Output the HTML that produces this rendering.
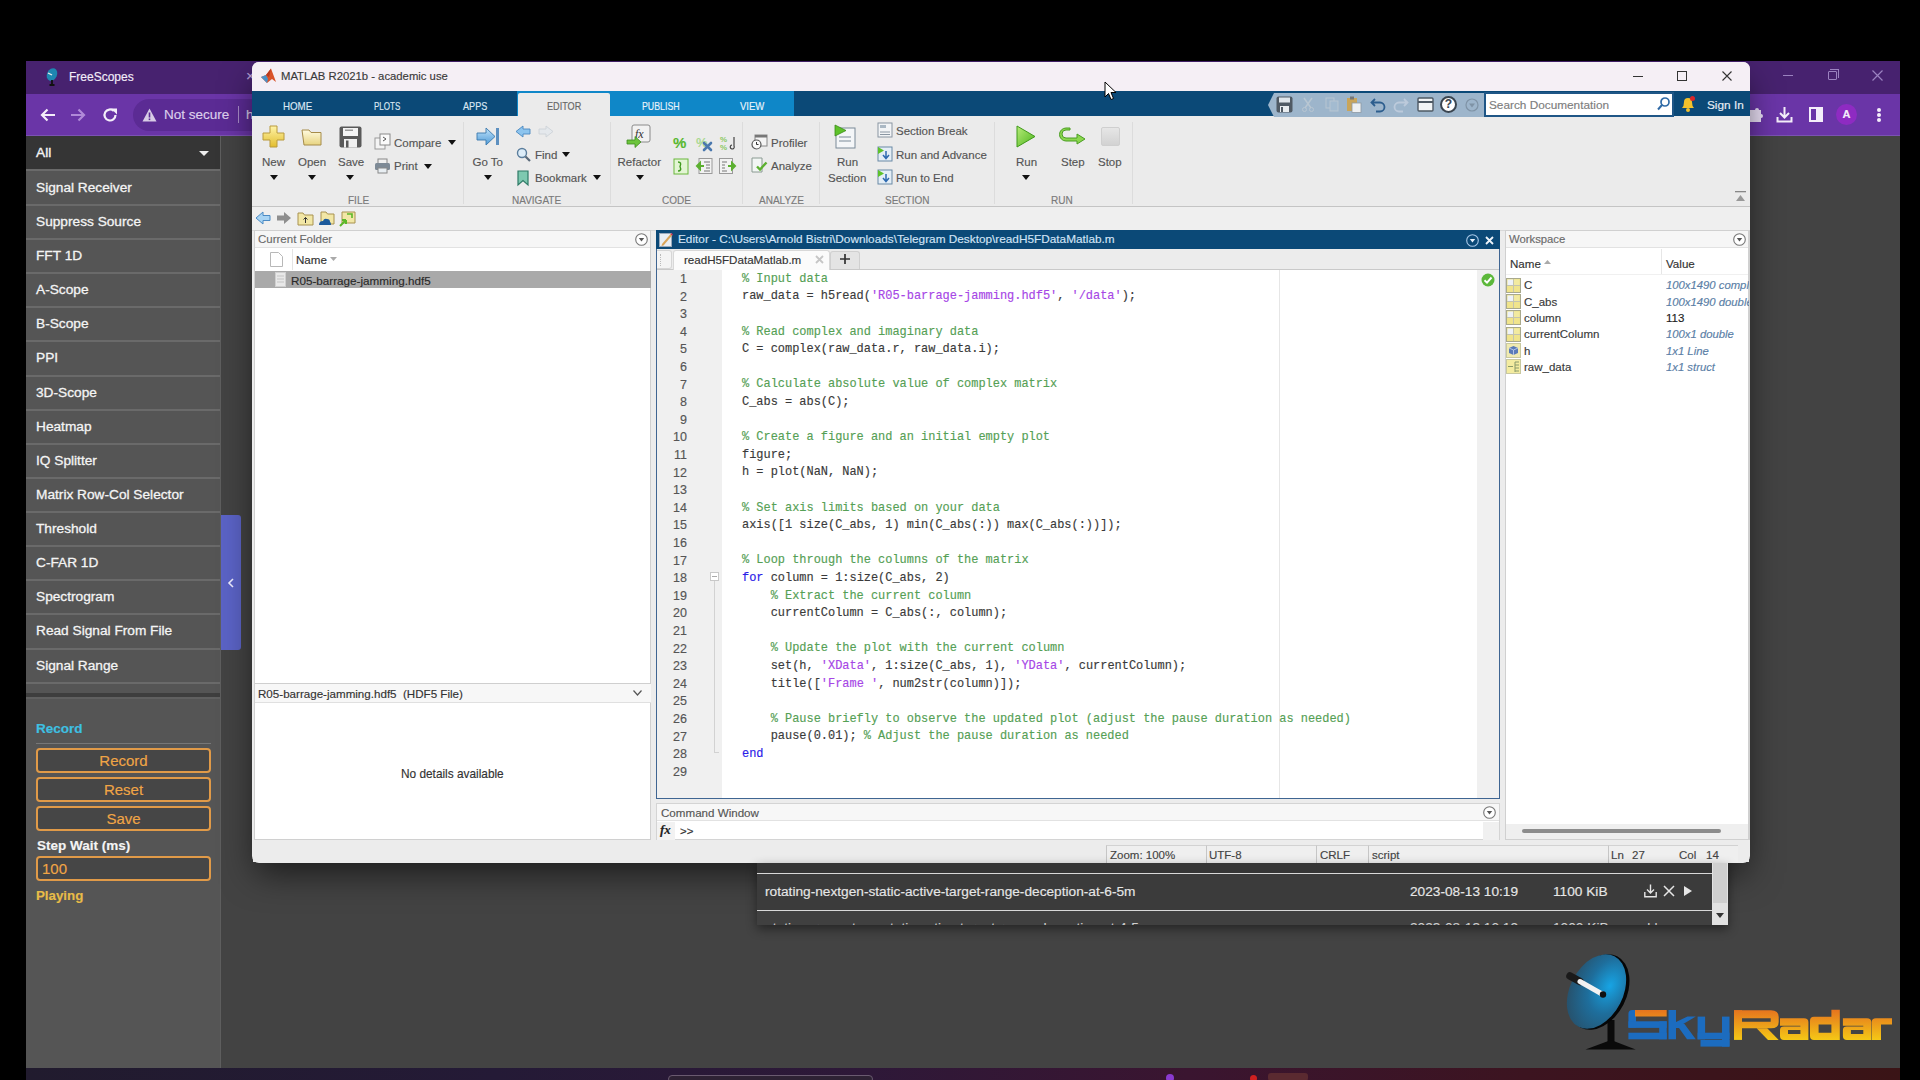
<!DOCTYPE html>
<html><head><meta charset="utf-8">
<style>
*{margin:0;padding:0;box-sizing:border-box}
html,body{width:1920px;height:1080px;overflow:hidden;background:#000;font-family:"Liberation Sans",sans-serif;position:relative;-webkit-text-stroke-width:0.15px}
.a{position:absolute}
.t{position:absolute;white-space:nowrap;line-height:1}
svg{position:absolute;overflow:visible}
/* browser */
.si{position:absolute;left:36px;color:#f4f4f4;font-size:13.7px;line-height:1;white-space:nowrap;-webkit-text-stroke:0.3px #f4f4f4}
.sl{position:absolute;left:26px;width:194px;height:2px;background:#6a6a6a}
.btn{position:absolute;left:36px;width:175px;height:25px;border:2px solid #e09a48;border-radius:4px;color:#f0a545;font-size:15px;text-align:center;line-height:21px;background:#464646}
/* matlab */
.mt{position:absolute;top:100px;font-size:10px;color:#dbe6f2;line-height:1;white-space:nowrap}
.rl{position:absolute;font-size:11.5px;color:#555;line-height:1;white-space:nowrap}
.sec{position:absolute;top:196px;font-size:10px;color:#7a7a7a;line-height:1;white-space:nowrap}
.vsep{position:absolute;top:122px;width:1px;height:82px;background:#dcdcdc}
.dd{position:absolute;width:0;height:0;border-left:4px solid transparent;border-right:4px solid transparent;border-top:5px solid #111}
.code{position:absolute;left:742px;font-family:"Liberation Mono",monospace;font-size:11.95px;line-height:1;white-space:pre;color:#3a3a3a}
.ln{position:absolute;width:30px;left:657px;text-align:right;font-size:12.5px;color:#555;line-height:1}
.cm{color:#55a055}
.st{color:#a646e6}
.kw{color:#2a20e8}
.ws{position:absolute;font-size:11.5px;line-height:1;white-space:nowrap;color:#222}
.wv{position:absolute;left:1665px;font-size:11px;line-height:1;white-space:nowrap;color:#3060a8;font-style:italic}
.sb{position:absolute;top:845px;height:18px;border-left:1px solid #c6c6c6;border-top:1px solid #d2d2d2;background:#efefef}
.sbt{position:absolute;top:850px;font-size:11.5px;color:#444;line-height:1;white-space:nowrap}
</style></head><body>
<!-- ============ BROWSER ============ -->
<div class="a" style="left:26px;top:61px;width:1874px;height:1007px;background:#434343"></div>
<div class="a" style="left:26px;top:61px;width:1874px;height:33px;background:#47226f"></div>
<div class="a" style="left:26px;top:94px;width:1874px;height:41px;background:#6a35a7"></div>
<div class="a" style="left:26px;top:135px;width:1874px;height:1px;background:#7b52b3"></div>
<!-- tab -->
<svg style="left:44px;top:68px" width="14" height="18" viewBox="0 0 14 18"><ellipse cx="8" cy="6.5" rx="5" ry="6.5" transform="rotate(25 8 6.5)" fill="#1f86b0"/><path d="M4 5 L8 7" stroke="#eee" stroke-width="1.3"/><path d="M8 12 V16.5 M5.5 17 H10.5" stroke="#111" stroke-width="1.8"/></svg>
<div class="t" style="left:69px;top:71px;font-size:12px;color:#f2ecf8">FreeScopes</div>
<div class="t" style="left:246px;top:68px;font-size:15px;color:#b8a2d8">×</div>
<!-- nav -->
<svg style="left:39px;top:107px" width="17" height="16" viewBox="0 0 17 16"><path d="M16 8 H3 M8.5 2.5 L3 8 L8.5 13.5" stroke="#f4eefa" stroke-width="2.2" fill="none"/></svg>
<svg style="left:70px;top:107px" width="17" height="16" viewBox="0 0 17 16"><path d="M1 8 H14 M8.5 2.5 L14 8 L8.5 13.5" stroke="#b08ad8" stroke-width="2.2" fill="none"/></svg>
<svg style="left:101px;top:106px" width="18" height="18" viewBox="0 0 18 18"><path d="M14.5 9 A5.5 5.5 0 1 1 12.8 5" stroke="#f4eefa" stroke-width="2.2" fill="none"/><path d="M10 2.5 L16 2.5 L16 8.5 Z" fill="#f4eefa"/></svg>
<div class="a" style="left:133px;top:99px;width:140px;height:32px;background:#5b2b94;border-radius:16px"></div>
<svg style="left:142px;top:108px" width="15" height="14" viewBox="0 0 15 14"><path d="M7.5 0.5 L14.5 13.5 L0.5 13.5 Z" fill="#d8cce6"/><rect x="6.7" y="4.5" width="1.6" height="5" fill="#5b2b94"/><rect x="6.7" y="10.5" width="1.6" height="1.6" fill="#5b2b94"/></svg>
<div class="t" style="left:164px;top:108px;font-size:13.5px;color:#ddd0ec">Not secure</div>
<div class="a" style="left:238px;top:106px;width:1px;height:17px;background:#a88cc8"></div>
<div class="t" style="left:246px;top:108px;font-size:13.5px;color:#ddd0ec">h</div>
<!-- right chrome -->
<div class="a" style="left:1783px;top:75px;width:10px;height:1px;background:#9b82c0"></div>
<div class="a" style="left:1828px;top:71px;width:9px;height:9px;border:1px solid #9b82c0;border-radius:1px"></div>
<div class="a" style="left:1830px;top:69px;width:9px;height:9px;border-top:1px solid #9b82c0;border-right:1px solid #9b82c0"></div>
<svg style="left:1872px;top:70px" width="11" height="11" viewBox="0 0 11 11"><path d="M0.5 0.5 L10.5 10.5 M10.5 0.5 L0.5 10.5" stroke="#9b82c0" stroke-width="1.2"/></svg>
<svg style="left:1750px;top:108px" width="12" height="14" viewBox="0 0 12 14"><path d="M0 2 h5 a2 2 0 0 1 4 0 h2 v4 a2 2 0 0 1 0 4 v4 h-11 z" fill="#e8def4"/></svg>
<svg style="left:1776px;top:106px" width="17" height="17" viewBox="0 0 17 17"><path d="M8.5 1 V11 M4 7 L8.5 11.5 L13 7 M1.5 11 V15.5 H15.5 V11" stroke="#f4eefa" stroke-width="2" fill="none"/></svg>
<svg style="left:1809px;top:107px" width="14" height="15" viewBox="0 0 14 15"><rect x="1" y="1" width="12" height="13" stroke="#f4eefa" stroke-width="2" fill="none"/><rect x="7" y="1" width="6" height="13" fill="#f4eefa"/></svg>
<div class="a" style="left:1836px;top:104px;width:21px;height:21px;border-radius:50%;background:#8e2bc2;color:#f4eefa;font-size:11px;font-weight:bold;text-align:center;line-height:21px">A</div>
<div class="a" style="left:1877px;top:108px;width:4px;height:4px;border-radius:50%;background:#f4eefa;box-shadow:0 5px 0 #f4eefa,0 10px 0 #f4eefa"></div>
<!-- sidebar -->
<div class="a" style="left:26px;top:136px;width:194px;height:932px;background:#555555"></div>
<div class="a" style="left:26px;top:136px;width:194px;height:34px;background:#353535"></div>
<div class="t" style="left:36px;top:146px;font-size:13.7px;color:#f4f4f4;-webkit-text-stroke:0.35px #f4f4f4">All</div>
<div class="dd" style="left:199px;top:151px;border-top-color:#eee;border-left-width:5px;border-right-width:5px"></div>
<div class="sl" style="top:169px;height:2px;background:#6a6a6a"></div>
<div class="sl" style="top:204px"></div>
<div class="sl" style="top:238px"></div>
<div class="sl" style="top:272px"></div>
<div class="sl" style="top:306px"></div>
<div class="sl" style="top:340px"></div>
<div class="sl" style="top:375px"></div>
<div class="sl" style="top:409px"></div>
<div class="sl" style="top:443px"></div>
<div class="sl" style="top:477px"></div>
<div class="sl" style="top:511px"></div>
<div class="sl" style="top:545px"></div>
<div class="sl" style="top:579px"></div>
<div class="sl" style="top:613px"></div>
<div class="sl" style="top:648px"></div>
<div class="sl" style="top:682px"></div>
<div class="sl" style="top:693px;height:4px;background:#3e3e3e"></div>
<div class="sl" style="top:697px;height:2px;background:#606060"></div>
<div class="si" style="top:181px">Signal Receiver</div>
<div class="si" style="top:215px">Suppress Source</div>
<div class="si" style="top:249px">FFT 1D</div>
<div class="si" style="top:283px">A-Scope</div>
<div class="si" style="top:317px">B-Scope</div>
<div class="si" style="top:351px">PPI</div>
<div class="si" style="top:386px">3D-Scope</div>
<div class="si" style="top:420px">Heatmap</div>
<div class="si" style="top:454px">IQ Splitter</div>
<div class="si" style="top:488px">Matrix Row-Col Selector</div>
<div class="si" style="top:522px">Threshold</div>
<div class="si" style="top:556px">C-FAR 1D</div>
<div class="si" style="top:590px">Spectrogram</div>
<div class="si" style="top:624px">Read Signal From File</div>
<div class="si" style="top:659px">Signal Range</div>
<div class="t" style="left:36px;top:722px;font-size:13.5px;font-weight:bold;color:#3ec0e2">Record</div>
<div class="a" style="left:36px;top:743px;width:175px;height:1px;background:#777"></div>
<div class="btn" style="top:748px">Record</div>
<div class="btn" style="top:777px">Reset</div>
<div class="btn" style="top:806px">Save</div>
<div class="t" style="left:37px;top:839px;font-size:13.5px;font-weight:bold;color:#f4f4f4">Step Wait (ms)</div>
<div class="btn" style="top:856px;text-align:left;padding-left:4px">100</div>
<div class="t" style="left:36px;top:889px;font-size:13.3px;font-weight:bold;color:#e8bc48">Playing</div>
<div class="a" style="left:220px;top:136px;width:1px;height:932px;background:#5e5e5e"></div>
<div class="a" style="left:221px;top:515px;width:20px;height:135px;background:#5b63c6;border-radius:0 3px 3px 0"></div>
<svg style="left:228px;top:578px" width="6" height="10" viewBox="0 0 6 10"><path d="M5 1 L1 5 L5 9" stroke="#eef" stroke-width="1.6" fill="none"/></svg>
<!-- taskbar -->
<div class="a" style="left:26px;top:1068px;width:1874px;height:12px;background:linear-gradient(90deg,#211b2e 0%,#241a36 25%,#2e1838 45%,#3a1530 62%,#3c1420 80%,#3a1416 100%)"></div>
<div class="a" style="left:668px;top:1075px;width:205px;height:8px;border:1px solid #6a5a70;border-radius:6px;background:#2e2234"></div>
<div class="a" style="left:1166px;top:1074px;width:8px;height:8px;border-radius:50%;background:#8a3ad0"></div>
<div class="a" style="left:1250px;top:1075px;width:7px;height:7px;border-radius:50%;background:#d02020"></div>
<div class="a" style="left:1268px;top:1073px;width:40px;height:8px;background:#5a2a30;border-radius:3px"></div>
<!-- MATLAB_START -->
<!-- MATLAB window frame -->
<div class="a" style="left:252px;top:62px;width:1498px;height:801px;background:#ececec;border-radius:7px;overflow:hidden;box-shadow:0 14px 34px -4px rgba(0,0,0,.6)">
  <div class="a" style="left:0;top:0;width:1498px;height:29px;background:#f5eff5"></div>
  <div class="a" style="left:0;top:29px;width:1498px;height:25px;background:#0b4977"></div>
  <div class="a" style="left:265px;top:29px;width:277px;height:25px;background:#0f87c8"></div>
  <div class="a" style="left:266px;top:31px;width:92px;height:24px;background:#ebebeb;border-radius:2px 2px 0 0"></div>
  <div class="a" style="left:0;top:54px;width:1498px;height:90px;background:#ebebeb"></div>
  <div class="a" style="left:0;top:144px;width:1498px;height:1px;background:#c4c4c4"></div>
  <div class="a" style="left:0;top:145px;width:1498px;height:23px;background:#efefef"></div>
  <div class="a" style="left:0;top:168px;width:1498px;height:1px;background:#d8d8d8"></div>
</div>
<!-- title bar -->
<svg style="left:260px;top:68px" width="17" height="16" viewBox="0 0 17 16"><path d="M1 9 L6 7 L11 0.5 L16 14 L12 11 L7 15 Z" fill="#d9532a"/><path d="M1 9 L6 7 L8 11 L7 15 Z" fill="#4a90c8"/><path d="M6 7 L11 0.5 L9 9 Z" fill="#b83a1e"/></svg>
<div class="t" style="left:281px;top:70.5px;font-size:11.3px;color:#3a3a3a">MATLAB R2021b - academic use</div>
<div class="a" style="left:1633px;top:76px;width:10px;height:1px;background:#333"></div>
<div class="a" style="left:1677px;top:71px;width:10px;height:10px;border:1px solid #333"></div>
<svg style="left:1722px;top:71px" width="10" height="10" viewBox="0 0 10 10"><path d="M0.5 0.5 L9.5 9.5 M9.5 0.5 L0.5 9.5" stroke="#333" stroke-width="1.1"/></svg>
<!-- tabs -->
<div class="t" style="left:283px;top:101px;font-size:10.6px;color:#dce8f4;transform:scaleX(.92);transform-origin:0 0">HOME</div>
<div class="t" style="left:373.5px;top:101px;font-size:10.6px;color:#dce8f4;transform:scaleX(.76);transform-origin:0 0">PLOTS</div>
<div class="t" style="left:463px;top:101px;font-size:10.6px;color:#dce8f4;transform:scaleX(.86);transform-origin:0 0">APPS</div>
<div class="t" style="left:547px;top:101px;font-size:10.6px;color:#666;transform:scaleX(.86);transform-origin:0 0">EDITOR</div>
<div class="t" style="left:642px;top:101px;font-size:10.6px;color:#eaf4fb;transform:scaleX(.83);transform-origin:0 0">PUBLISH</div>
<div class="t" style="left:740px;top:101px;font-size:10.6px;color:#eaf4fb;transform:scaleX(.9);transform-origin:0 0">VIEW</div>
<!-- quick access -->
<svg style="left:1266px;top:93px" width="220" height="24" viewBox="0 0 220 24"><path d="M8 0 H220 V24 H8 L2 12 Z" fill="#9db5cb"/></svg>
<svg style="left:1276px;top:96px" width="17" height="17" viewBox="0 0 17 17"><rect x="0.5" y="0.5" width="16" height="16" rx="2" fill="#505a64"/><rect x="3" y="1.5" width="11" height="5" fill="#dfe5ea"/><rect x="4" y="10" width="9" height="6" fill="#e8ecef"/><rect x="5" y="11" width="2" height="5" fill="#505a64"/></svg>
<svg style="left:1302px;top:97px" width="12" height="15" viewBox="0 0 12 15"><path d="M2 1 L9 11 M10 1 L3 11" stroke="#b8c6d2" stroke-width="1.5"/><circle cx="2.5" cy="12.5" r="2" fill="none" stroke="#b8c6d2"/><circle cx="9.5" cy="12.5" r="2" fill="none" stroke="#b8c6d2"/></svg>
<svg style="left:1325px;top:97px" width="14" height="15" viewBox="0 0 14 15"><rect x="1" y="1" width="8" height="10" fill="none" stroke="#b8c6d2"/><rect x="5" y="4" width="8" height="10" fill="#a3bbd0" stroke="#b8c6d2"/></svg>
<svg style="left:1346px;top:96px" width="16" height="17" viewBox="0 0 16 17"><rect x="1" y="2" width="10" height="13" fill="#c9a55a"/><rect x="4" y="0.5" width="4" height="3" fill="#777"/><rect x="6" y="7" width="9" height="9.5" fill="#eef0f2" stroke="#8d99a4" stroke-width=".8"/></svg>
<svg style="left:1370px;top:97px" width="16" height="15" viewBox="0 0 16 15"><path d="M5 2 L1.5 5.5 L5 9 M1.5 5.5 H10 a4.5 4.5 0 0 1 0 9 H6" stroke="#2d5e8e" stroke-width="1.8" fill="none"/></svg>
<svg style="left:1393px;top:97px" width="16" height="15" viewBox="0 0 16 15"><path d="M11 2 L14.5 5.5 L11 9 M14.5 5.5 H6 a4.5 4.5 0 0 0 0 9 H10" stroke="#bccadb" stroke-width="1.8" fill="none"/></svg>
<svg style="left:1417px;top:97px" width="17" height="15" viewBox="0 0 17 15"><rect x="1" y="1" width="15" height="13" rx="1" fill="#f2f4f6" stroke="#4e5964" stroke-width="1.4"/><rect x="1" y="4" width="15" height="2" fill="#4e5964"/></svg>
<div class="a" style="left:1440px;top:96px;width:17px;height:17px;border-radius:50%;background:#fff;border:2px solid #3a4550;color:#3a4550;font-size:12px;font-weight:bold;text-align:center;line-height:13px">?</div>
<svg style="left:1465px;top:98px" width="14" height="14" viewBox="0 0 14 14"><circle cx="7" cy="7" r="6" fill="none" stroke="#7f93a6" stroke-width="1.2"/><path d="M4 5.5 H10 L7 9.5 Z" fill="#7f93a6"/></svg>
<div class="a" style="left:1484px;top:92px;width:190px;height:25px;background:#fff;border:2px solid #1f5686"></div>
<div class="t" style="left:1489px;top:100px;font-size:11.8px;color:#7d7d7d">Search Documentation</div>
<svg style="left:1657px;top:97px" width="13" height="14" viewBox="0 0 13 14"><circle cx="8" cy="5" r="4" fill="none" stroke="#2f6aa6" stroke-width="1.7"/><path d="M5 8 L1 12.5" stroke="#2f6aa6" stroke-width="2"/></svg>
<svg style="left:1680px;top:95px" width="16" height="18" viewBox="0 0 16 18"><path d="M2 13 Q4 11 4 7 A4 4 0 0 1 12 7 Q12 11 14 13 Z" fill="#f3c12b"/><circle cx="8" cy="15" r="2" fill="#f3c12b"/><circle cx="12.5" cy="3.5" r="2.5" fill="#d8262a"/></svg>
<div class="t" style="left:1707px;top:100px;font-size:11.8px;color:#e8eff6">Sign In</div>
<!-- ribbon: FILE -->
<svg style="left:262px;top:125px" width="23" height="23" viewBox="0 0 23 23"><defs><linearGradient id="gy" x1="0" y1="0" x2="0" y2="1"><stop offset="0" stop-color="#fff4a8"/><stop offset="1" stop-color="#e2bd2e"/></linearGradient></defs><path d="M8 1 H15 V8 H22 V15 H15 V22 H8 V15 H1 V8 H8 Z" fill="url(#gy)" stroke="#b99a3c" stroke-width="1"/></svg>
<div class="rl" style="left:262px;top:156.5px">New</div>
<div class="dd" style="left:270px;top:175px"></div>
<svg style="left:301px;top:129px" width="22" height="17" viewBox="0 0 22 17"><defs><linearGradient id="gf" x1="0" y1="0" x2="0" y2="1"><stop offset="0" stop-color="#fffbe0"/><stop offset="1" stop-color="#e8d480"/></linearGradient></defs><path d="M1 1 H8 L10 3.5 H20 V16 H3 Z" fill="url(#gf)" stroke="#a68c4a" stroke-width="1"/></svg>
<div class="rl" style="left:298px;top:156.5px">Open</div>
<div class="dd" style="left:307.5px;top:175px"></div>
<svg style="left:339px;top:126px" width="23" height="22" viewBox="0 0 23 22"><rect x="0.5" y="0.5" width="22" height="21" rx="2" fill="#5a5a5a"/><rect x="4" y="2" width="15" height="8" fill="#f4f4f4"/><rect x="6" y="3.5" width="8" height="1.5" fill="#999"/><rect x="5" y="13" width="13" height="8.5" fill="#f0f0f0"/><rect x="7" y="14.5" width="2.5" height="7" fill="#5a5a5a"/></svg>
<div class="rl" style="left:338px;top:156.5px">Save</div>
<div class="dd" style="left:346px;top:175px"></div>
<svg style="left:374px;top:133px" width="17" height="17" viewBox="0 0 17 17"><rect x="1" y="5" width="10" height="11" fill="#f4f4f4" stroke="#9a9a9a"/><rect x="6" y="1" width="10" height="11" fill="#fafafa" stroke="#8a8a8a"/><path d="M9 4 L12 6 L9 8" stroke="#555" fill="none"/></svg>
<div class="rl" style="left:394px;top:138px">Compare</div>
<div class="dd" style="left:448px;top:140px"></div>
<svg style="left:374px;top:158px" width="17" height="16" viewBox="0 0 17 16"><rect x="4" y="1" width="9" height="5" fill="#f0f0f0" stroke="#888"/><rect x="1" y="5" width="15" height="7" rx="1.5" fill="#7d8a96"/><rect x="4" y="10" width="9" height="5" fill="#e8eef2" stroke="#888"/></svg>
<div class="rl" style="left:394px;top:161px">Print</div>
<div class="dd" style="left:424px;top:164px"></div>
<div class="sec" style="left:348px">FILE</div>
<div class="vsep" style="left:463px"></div>
<!-- NAVIGATE -->
<svg style="left:476px;top:127px" width="25" height="19" viewBox="0 0 25 19"><defs><linearGradient id="gb" x1="0" y1="0" x2="0" y2="1"><stop offset="0" stop-color="#bfe3fb"/><stop offset="1" stop-color="#4f9ad6"/></linearGradient></defs><path d="M1 6 H10 V1 L19 9.5 L10 18 V13 H1 Z" fill="url(#gb)" stroke="#3a78ad" stroke-width=".9"/><rect x="20" y="1" width="3" height="17" fill="#5d90c0"/></svg>
<div class="rl" style="left:472.5px;top:156.5px">Go To</div>
<div class="dd" style="left:484px;top:175px"></div>
<svg style="left:515px;top:125px" width="16" height="13" viewBox="0 0 16 13"><path d="M15 4 H8 V1 L1 6.5 L8 12 V9 H15 Z" fill="#8cc4ee" stroke="#4a88c0" stroke-width=".9"/></svg>
<svg style="left:538px;top:125px" width="16" height="13" viewBox="0 0 16 13"><path d="M1 4 H8 V1 L15 6.5 L8 12 V9 H1 Z" fill="#e4e8ec" stroke="#cdd3d8" stroke-width=".9"/></svg>
<svg style="left:516px;top:147px" width="15" height="15" viewBox="0 0 15 15"><circle cx="6" cy="6" r="4.5" fill="#dcecf8" stroke="#5a7d9c" stroke-width="1.4"/><path d="M9.5 9.5 L14 14" stroke="#5a6a7a" stroke-width="2.2"/></svg>
<div class="rl" style="left:535px;top:149.5px">Find</div>
<div class="dd" style="left:562px;top:152px"></div>
<svg style="left:517px;top:170px" width="12" height="16" viewBox="0 0 12 16"><path d="M1 1 H11 V15 L6 10.5 L1 15 Z" fill="#7ec9b0" stroke="#2e7a66" stroke-width="1.2"/></svg>
<div class="rl" style="left:535px;top:172.5px">Bookmark</div>
<div class="dd" style="left:593px;top:175px"></div>
<div class="sec" style="left:512px">NAVIGATE</div>
<div class="vsep" style="left:610px"></div>
<!-- CODE -->
<svg style="left:626px;top:124px" width="26" height="24" viewBox="0 0 26 24"><rect x="6" y="1" width="18" height="17" rx="2" fill="#f2f2f2" stroke="#8a8a8a"/><text x="9" y="14" font-family="Liberation Serif" font-style="italic" font-size="12" fill="#333">fx</text><path d="M1 16 H9 V12.5 L15 18 L9 23.5 V20 H1 Z" fill="#6cc43c" stroke="#3d8a1e" stroke-width=".8"/></svg>
<div class="rl" style="left:617.5px;top:156.5px">Refactor</div>
<div class="dd" style="left:636px;top:175px"></div>
<div class="t" style="left:673px;top:135px;font-size:15px;color:#58b830;font-weight:bold">%</div>
<svg style="left:696px;top:135px" width="17" height="16" viewBox="0 0 17 16"><text x="0" y="12" font-size="13" font-weight="bold" fill="#a8d890" font-family="Liberation Sans">%</text><path d="M8 8 L15 15 M15 8 L8 15" stroke="#4a78ae" stroke-width="2.6" stroke-linecap="round"/></svg>
<svg style="left:720px;top:134px" width="17" height="17" viewBox="0 0 17 17"><text x="0" y="8" font-size="8" font-weight="bold" fill="#8ac860" font-family="Liberation Sans">%</text><text x="0" y="16" font-size="8" font-weight="bold" fill="#8ac860" font-family="Liberation Sans">%</text><path d="M14 3 V12 a2 2 0 1 1 -2 -1" stroke="#444" stroke-width="1.2" fill="none"/></svg>
<svg style="left:673px;top:158px" width="16" height="17" viewBox="0 0 16 17"><rect x="1" y="1" width="14" height="15" fill="#e3f5d4" stroke="#6ab83c"/><path d="M5 4 Q9 4 7 8.5 Q9 13 5 13" stroke="#3f9a1e" stroke-width="1.4" fill="none"/></svg>
<svg style="left:696px;top:158px" width="17" height="16" viewBox="0 0 17 16"><rect x="3" y="0.5" width="13" height="15" fill="#f2f2f2" stroke="#9a9a9a"/><path d="M8 4 H14 M10 7 H14 M10 10 H14 M8 13 H14" stroke="#777"/><path d="M1 8 L4 5 V11 Z M4 8 H8" fill="#5cb030" stroke="#5cb030" stroke-width="2"/></svg>
<svg style="left:719px;top:158px" width="17" height="16" viewBox="0 0 17 16"><rect x="0.5" y="0.5" width="13" height="15" fill="#f2f2f2" stroke="#9a9a9a"/><path d="M3 4 H8 M3 7 H6 M3 10 H6 M3 13 H8" stroke="#777"/><path d="M16 8 L13 5 V11 Z M13 8 H9" fill="#5cb030" stroke="#5cb030" stroke-width="2"/></svg>
<div class="sec" style="left:662px">CODE</div>
<div class="vsep" style="left:742px"></div>
<!-- ANALYZE -->
<svg style="left:751px;top:134px" width="17" height="16" viewBox="0 0 17 16"><rect x="4" y="1" width="12" height="11" fill="#f4f4f4" stroke="#888"/><rect x="4" y="1" width="12" height="2.5" fill="#777"/><circle cx="5.5" cy="10.5" r="4.5" fill="#fafafa" stroke="#555" stroke-width="1.2"/><path d="M5.5 8 V10.5 H7.5" stroke="#333" fill="none"/></svg>
<div class="rl" style="left:771px;top:137.5px">Profiler</div>
<svg style="left:751px;top:157px" width="17" height="16" viewBox="0 0 17 16"><path d="M1 1 H11 V15 H1 Z" fill="#f2f6f4" stroke="#8a9a92"/><path d="M6 9.5 L9 12.5 L15.5 5.5" stroke="#5cb030" stroke-width="2.4" fill="none"/></svg>
<div class="rl" style="left:771px;top:160.5px">Analyze</div>
<div class="sec" style="left:759px">ANALYZE</div>
<div class="vsep" style="left:819px"></div>
<!-- SECTION -->
<svg style="left:834px;top:124px" width="23" height="25" viewBox="0 0 23 25"><rect x="2" y="4" width="19" height="20" fill="#f4f6f8" stroke="#7a8a98"/><path d="M5 13 H17 M5 17 H17" stroke="#7a8a98" stroke-width="1.2"/><path d="M1 1 L12 6.5 L1 12 Z" fill="#5ec22a" stroke="#3a8a18" stroke-width=".8"/></svg>
<div class="rl" style="left:837px;top:156.5px">Run</div>
<div class="rl" style="left:828px;top:172.5px">Section</div>
<svg style="left:877px;top:122px" width="16" height="16" viewBox="0 0 16 16"><rect x="1" y="1" width="14" height="14" fill="#f2f4f6" stroke="#8a96a2"/><rect x="3" y="3" width="6" height="3" fill="#aab8c4"/><path d="M3 10 H13 M3 12.5 H13" stroke="#8a96a2"/></svg>
<div class="rl" style="left:896px;top:126px">Section Break</div>
<svg style="left:877px;top:146px" width="16" height="16" viewBox="0 0 16 16"><rect x="1" y="1" width="14" height="14" fill="#e4eef6" stroke="#6a8aa6"/><path d="M1 1 L7 4.5 L1 8 Z" fill="#5ec22a"/><path d="M9 5 V12 M6 9 L9 12.5 L12 9" stroke="#2e6ab0" stroke-width="1.5" fill="none"/></svg>
<div class="rl" style="left:896px;top:149.5px">Run and Advance</div>
<svg style="left:877px;top:169px" width="16" height="16" viewBox="0 0 16 16"><rect x="1" y="1" width="14" height="14" fill="#e4eef6" stroke="#6a8aa6"/><path d="M1 1 L7 4.5 L1 8 Z" fill="#5ec22a"/><path d="M9 5 V12 M6 9 L9 12.5 L12 9" stroke="#2e6ab0" stroke-width="1.5" fill="none"/></svg>
<div class="rl" style="left:896px;top:172.5px">Run to End</div>
<div class="sec" style="left:885px">SECTION</div>
<div class="vsep" style="left:994px"></div>
<!-- RUN -->
<svg style="left:1016px;top:125px" width="20" height="23" viewBox="0 0 20 23"><defs><linearGradient id="gg" x1="0" y1="0" x2="1" y2="1"><stop offset="0" stop-color="#b8ec7a"/><stop offset="1" stop-color="#4cb41c"/></linearGradient></defs><path d="M1 1 L19 11.5 L1 22 Z" fill="url(#gg)" stroke="#3f9a1a" stroke-width="1"/></svg>
<div class="rl" style="left:1016px;top:156.5px">Run</div>
<div class="dd" style="left:1022px;top:175px"></div>
<svg style="left:1061px;top:125px" width="25" height="22" viewBox="0 0 25 22"><path d="M9 5 H5 a4 4 0 0 0 0 8 H16 V9 L24 14 L16 19 V16 H5 a6.5 6.5 0 0 1 0 -13 H9 Z" fill="#8ad64e" stroke="#4a9e22" stroke-width="1"/></svg>
<div class="rl" style="left:1061px;top:156.5px">Step</div>
<div class="a" style="left:1101px;top:127px;width:19px;height:19px;background:linear-gradient(#e6e6e6,#d2d2d2);border:1px solid #cfcfcf;border-radius:2px"></div>
<div class="rl" style="left:1098px;top:156.5px">Stop</div>
<div class="sec" style="left:1051px">RUN</div>
<div class="vsep" style="left:1132px"></div>
<svg style="left:1735px;top:191px" width="11" height="12" viewBox="0 0 11 12"><rect x="0" y="0" width="11" height="1.3" fill="#888"/><path d="M1 10 L5.5 4 L10 10 Z" fill="#999"/></svg>
<!-- nav toolbar -->
<svg style="left:255px;top:211px" width="16" height="14" viewBox="0 0 16 14"><path d="M15 4.5 H8 V1 L1 7 L8 13 V9.5 H15 Z" fill="#a8d4f4" stroke="#4a8ac4" stroke-width="1"/></svg>
<svg style="left:276px;top:211px" width="16" height="14" viewBox="0 0 16 14"><path d="M1 4.5 H8 V1 L15 7 L8 13 V9.5 H1 Z" fill="#8e8e8e"/></svg>
<svg style="left:297px;top:211px" width="17" height="15" viewBox="0 0 17 15"><path d="M1 2 H6 L7.5 4 H16 V14 H1 Z" fill="#f2e7a6" stroke="#a89250"/><path d="M8.5 12 V6.5 M6.5 8.5 L8.5 6.5 L10.5 8.5" stroke="#333" fill="none"/></svg>
<svg style="left:318px;top:211px" width="17" height="15" viewBox="0 0 17 15"><path d="M3 1 H8 L9.5 3 H16 V13 H3 Z" fill="#f2e7a6" stroke="#a89250"/><path d="M1 14 Q1 10 5 10 Q6 7 9 8 Q12 8 12 11 Q13 11 13 14 Z" fill="#1c5a9c"/></svg>
<svg style="left:339px;top:211px" width="17" height="16" viewBox="0 0 17 16"><path d="M3 1 H16 V12 H3 Z" fill="#f2e7a6" stroke="#a89250"/><path d="M1 15 L7 9 M7 9 V13 M7 9 H3" stroke="#5ab82a" stroke-width="2" fill="none"/><path d="M8 3 H13 V7" stroke="#5ab82a" stroke-width="1.6" fill="none"/></svg>
<!-- PANELS -->
<div class="a" style="left:254px;top:230px;width:397px;height:610px;background:#fff;border:1px solid #d0d0d0"></div>
<div class="a" style="left:255px;top:231px;width:395px;height:17px;background:#f6f6f6;border-bottom:1px solid #e2e2e2"></div>
<div class="t" style="left:258px;top:233.5px;font-size:11.5px;color:#6a6a6a">Current Folder</div>
<svg style="left:635px;top:233px" width="13" height="13" viewBox="0 0 13 13"><circle cx="6.5" cy="6.5" r="5.8" fill="#fff" stroke="#777" stroke-width="1.1"/><path d="M3.8 5 H9.2 L6.5 8.6 Z" fill="#555"/></svg>
<svg style="left:270px;top:252px" width="13" height="15" viewBox="0 0 13 15"><path d="M0.5 0.5 H8.5 L12.5 4.5 V14.5 H0.5 Z" fill="#fff" stroke="#b8b8b8"/></svg>
<div class="a" style="left:292px;top:249px;width:1px;height:21px;background:#e4e4e4"></div>
<div class="t" style="left:296px;top:254px;font-size:11.6px;color:#333">Name</div>
<svg style="left:330px;top:257px" width="7" height="4" viewBox="0 0 7 4"><path d="M0 0 H7 L3.5 4 Z" fill="#aaa"/></svg>
<div class="a" style="left:255px;top:271px;width:396px;height:17px;background:#a9a9a9"></div>
<svg style="left:275px;top:272px" width="11" height="15" viewBox="0 0 11 15"><rect x="0.5" y="0.5" width="10" height="14" fill="#e8e8e8" stroke="#cfcfcf"/><path d="M2 4 H9 M2 7 H9 M2 10 H9" stroke="#c4c4c4"/></svg>
<div class="t" style="left:291px;top:275px;font-size:11.7px;color:#2a2a2a">R05-barrage-jamming.hdf5</div>
<div class="a" style="left:255px;top:683px;width:396px;height:20px;background:#f7f7f7;border-top:1px solid #cfcfcf;border-bottom:1px solid #e0e0e0"></div>
<div class="t" style="left:258px;top:688px;font-size:11.6px;color:#333">R05-barrage-jamming.hdf5 &nbsp;(HDF5 File)</div>
<svg style="left:633px;top:690px" width="9" height="6" viewBox="0 0 9 6"><path d="M0.5 0.5 L4.5 5 L8.5 0.5" stroke="#555" stroke-width="1.2" fill="none"/></svg>
<div class="t" style="left:401px;top:768.5px;font-size:11.85px;color:#333">No details available</div>
<div class="a" style="left:656px;top:230px;width:844px;height:569px;background:#fff;border:1px solid #3f6592"></div>
<div class="a" style="left:656px;top:230px;width:844px;height:19px;background:#0b4977"></div>
<svg style="left:659px;top:232px" width="14" height="15" viewBox="0 0 14 15"><rect x="0.5" y="1.5" width="12" height="13" fill="#e8eef4" stroke="#9aaabb"/><path d="M3 12 L12 1.5 L13.5 3 L4.5 13.5 L2.5 14 Z" fill="#d9a55a"/><path d="M12 1.5 L13.5 3" stroke="#c03060" stroke-width="1.5"/></svg>
<div class="t" style="left:678px;top:234px;font-size:11.8px;color:#d2e4f6">Editor - C:\Users\Arnold Bistri\Downloads\Telegram Desktop\readH5FDataMatlab.m</div>
<svg style="left:1466px;top:234px" width="13" height="13" viewBox="0 0 13 13"><circle cx="6.5" cy="6.5" r="5.8" fill="none" stroke="#a8c8e8" stroke-width="1.1"/><path d="M3.8 5 H9.2 L6.5 8.6 Z" fill="#e8f2fc"/></svg>
<svg style="left:1485px;top:236px" width="9" height="9" viewBox="0 0 9 9"><path d="M1 1 L8 8 M8 1 L1 8" stroke="#eef4fa" stroke-width="1.8"/></svg>
<div class="a" style="left:657px;top:249px;width:842px;height:21px;background:#ececec;border-bottom:1px solid #c9c9c9"></div>
<div class="a" style="left:657px;top:250px;width:15px;height:19px;background:#f4f4f4;border:1px solid #d6d6d6;border-left:none;border-radius:0 3px 3px 0"></div>
<div class="a" style="left:660px;top:254px;width:1px;height:12px;border-left:1px dotted #bbb"></div>
<div class="a" style="left:673px;top:250px;width:157px;height:20px;background:#fbfbfb;border:1px solid #d8d8d8;border-bottom:none;border-radius:3px 3px 0 0"></div>
<div class="t" style="left:684px;top:254px;font-size:11.6px;color:#333">readH5FDataMatlab.m</div>
<svg style="left:815px;top:255px" width="9" height="9" viewBox="0 0 9 9"><path d="M1 1 L8 8 M8 1 L1 8" stroke="#c6c6c6" stroke-width="1.8"/></svg>
<div class="a" style="left:830px;top:251px;width:30px;height:18px;background:#e4e4e4;border:1px solid #d0d0d0;border-bottom:none;border-radius:3px 3px 0 0"></div>
<svg style="left:840px;top:254px" width="10" height="10" viewBox="0 0 10 10"><path d="M5 0 V10 M0 5 H10" stroke="#333" stroke-width="1.7"/></svg>
<div class="a" style="left:657px;top:270px;width:65px;height:528px;background:#f0f0f0"></div>
<div class="a" style="left:1279px;top:270px;width:1px;height:528px;background:#e6e6e6"></div>
<div class="a" style="left:1477px;top:270px;width:22px;height:528px;background:#f0f0f0"></div>
<svg style="left:1481px;top:273px" width="14" height="14" viewBox="0 0 14 14"><circle cx="7" cy="7" r="6.5" fill="#5cb83a"/><path d="M3.5 7.2 L6 9.6 L10.5 4.5" stroke="#fff" stroke-width="1.9" fill="none"/></svg>
<div class="a" style="left:710px;top:571.8px;width:9px;height:9px;border:1px solid #c8c8c8;background:#fff"></div>
<div class="a" style="left:712px;top:576.3px;width:5px;height:1px;background:#aaa"></div>
<div class="a" style="left:714px;top:580.8px;width:1px;height:171.6px;background:#d2d2d2"></div>
<div class="a" style="left:714px;top:752.4px;width:5px;height:1px;background:#d2d2d2"></div>
<div class="ln" style="top:272.9px">1</div>
<div class="code" style="top:273.8px"><span class="cm">% Input data</span></div>
<div class="ln" style="top:290.5px">2</div>
<div class="code" style="top:291.4px">raw_data = h5read(<span class="st">&#x27;R05-barrage-jamming.hdf5&#x27;</span>, <span class="st">&#x27;/data&#x27;</span>);</div>
<div class="ln" style="top:308.1px">3</div>
<div class="ln" style="top:325.7px">4</div>
<div class="code" style="top:326.6px"><span class="cm">% Read complex and imaginary data</span></div>
<div class="ln" style="top:343.3px">5</div>
<div class="code" style="top:344.2px">C = complex(raw_data.r, raw_data.i);</div>
<div class="ln" style="top:360.9px">6</div>
<div class="ln" style="top:378.5px">7</div>
<div class="code" style="top:379.4px"><span class="cm">% Calculate absolute value of complex matrix</span></div>
<div class="ln" style="top:396.1px">8</div>
<div class="code" style="top:397.0px">C_abs = abs(C);</div>
<div class="ln" style="top:413.7px">9</div>
<div class="ln" style="top:431.3px">10</div>
<div class="code" style="top:432.2px"><span class="cm">% Create a figure and an initial empty plot</span></div>
<div class="ln" style="top:448.9px">11</div>
<div class="code" style="top:449.8px">figure;</div>
<div class="ln" style="top:466.5px">12</div>
<div class="code" style="top:467.4px">h = plot(NaN, NaN);</div>
<div class="ln" style="top:484.1px">13</div>
<div class="ln" style="top:501.7px">14</div>
<div class="code" style="top:502.6px"><span class="cm">% Set axis limits based on your data</span></div>
<div class="ln" style="top:519.3px">15</div>
<div class="code" style="top:520.2px">axis([1 size(C_abs, 1) min(C_abs(:)) max(C_abs(:))]);</div>
<div class="ln" style="top:536.9px">16</div>
<div class="ln" style="top:554.5px">17</div>
<div class="code" style="top:555.4px"><span class="cm">% Loop through the columns of the matrix</span></div>
<div class="ln" style="top:572.1px">18</div>
<div class="code" style="top:573.0px"><span class="kw">for</span> column = 1:size(C_abs, 2)</div>
<div class="ln" style="top:589.7px">19</div>
<div class="code" style="top:590.6px">    <span class="cm">% Extract the current column</span></div>
<div class="ln" style="top:607.3px">20</div>
<div class="code" style="top:608.2px">    currentColumn = C_abs(:, column);</div>
<div class="ln" style="top:624.9px">21</div>
<div class="ln" style="top:642.5px">22</div>
<div class="code" style="top:643.4px">    <span class="cm">% Update the plot with the current column</span></div>
<div class="ln" style="top:660.1px">23</div>
<div class="code" style="top:661.0px">    set(h, <span class="st">&#x27;XData&#x27;</span>, 1:size(C_abs, 1), <span class="st">&#x27;YData&#x27;</span>, currentColumn);</div>
<div class="ln" style="top:677.7px">24</div>
<div class="code" style="top:678.6px">    title([<span class="st">&#x27;Frame &#x27;</span>, num2str(column)]);</div>
<div class="ln" style="top:695.3px">25</div>
<div class="ln" style="top:712.9px">26</div>
<div class="code" style="top:713.8px">    <span class="cm">% Pause briefly to observe the updated plot (adjust the pause duration as needed)</span></div>
<div class="ln" style="top:730.5px">27</div>
<div class="code" style="top:731.4px">    pause(0.01); <span class="cm">% Adjust the pause duration as needed</span></div>
<div class="ln" style="top:748.1px">28</div>
<div class="code" style="top:749.0px"><span class="kw">end</span></div>
<div class="ln" style="top:765.7px">29</div>
<div class="a" style="left:656px;top:803px;width:844px;height:37px;background:#fff;border:1px solid #d4d4d4"></div>
<div class="a" style="left:657px;top:804px;width:842px;height:17px;background:#f7f7f7;border-bottom:1px solid #e2e2e2"></div>
<div class="t" style="left:661px;top:806.5px;font-size:11.6px;color:#555">Command Window</div>
<svg style="left:1483px;top:806px" width="13" height="13" viewBox="0 0 13 13"><circle cx="6.5" cy="6.5" r="5.8" fill="#fff" stroke="#777" stroke-width="1.1"/><path d="M3.8 5 H9.2 L6.5 8.6 Z" fill="#555"/></svg>
<div class="a" style="left:657px;top:822px;width:18px;height:18px;background:#f2f2f2"></div>
<div class="t" style="left:660px;top:823px;font-size:13px;color:#222;font-family:'Liberation Serif',serif;font-style:italic;font-weight:bold">fx</div>
<div class="t" style="left:680px;top:826px;font-size:11.5px;color:#333">&gt;&gt;</div>
<div class="a" style="left:1483px;top:822px;width:16px;height:18px;background:#f0f0f0"></div>
<div class="a" style="left:1505px;top:230px;width:244px;height:610px;background:#fff;border:1px solid #d0d0d0"></div>
<div class="a" style="left:1506px;top:231px;width:242px;height:17px;background:#f6f6f6;border-bottom:1px solid #e2e2e2"></div>
<div class="t" style="left:1509px;top:233.5px;font-size:11.3px;color:#6a6a6a">Workspace</div>
<svg style="left:1733px;top:233px" width="13" height="13" viewBox="0 0 13 13"><circle cx="6.5" cy="6.5" r="5.8" fill="#fff" stroke="#777" stroke-width="1.1"/><path d="M3.8 5 H9.2 L6.5 8.6 Z" fill="#555"/></svg>
<div class="a" style="left:1661px;top:249px;width:1px;height:25px;background:#e6e6e6"></div>
<div class="a" style="left:1506px;top:274px;width:242px;height:1px;background:#f0f0f0"></div>
<div class="t" style="left:1510px;top:258px;font-size:11.6px;color:#333">Name</div>
<svg style="left:1544px;top:260px" width="7" height="4" viewBox="0 0 7 4"><path d="M0 4 H7 L3.5 0 Z" fill="#aaa"/></svg>
<div class="t" style="left:1666px;top:258px;font-size:11.6px;color:#333">Value</div>
<svg style="left:1506px;top:277.7px" width="15" height="15" viewBox="0 0 15 15"><rect x="0.5" y="0.5" width="14" height="14" fill="#ece38a" stroke="#a9a98c"/><rect x="1.5" y="1.5" width="5.5" height="5.5" fill="#eef2f8"/><rect x="8" y="1.5" width="5.5" height="5.5" fill="#f2eaa0"/><rect x="1.5" y="8" width="5.5" height="5.5" fill="#f0e48c"/><rect x="8" y="8" width="5.5" height="5.5" fill="#f0e48c"/><path d="M7.5 1 V14 M1 7.5 H14" stroke="#c4c4b0" stroke-width="1"/></svg>
<div class="t" style="left:1524px;top:280.4px;font-size:11.5px;color:#3a3a3a">C</div>
<div class="t" style="left:1666px;top:280.4px;font-size:11.3px;color:#5a7ea6;font-style:italic;width:83px;overflow:hidden;height:14px">100x1490 complex</div>
<svg style="left:1506px;top:294.0px" width="15" height="15" viewBox="0 0 15 15"><rect x="0.5" y="0.5" width="14" height="14" fill="#ece38a" stroke="#a9a98c"/><rect x="1.5" y="1.5" width="5.5" height="5.5" fill="#eef2f8"/><rect x="8" y="1.5" width="5.5" height="5.5" fill="#f2eaa0"/><rect x="1.5" y="8" width="5.5" height="5.5" fill="#f0e48c"/><rect x="8" y="8" width="5.5" height="5.5" fill="#f0e48c"/><path d="M7.5 1 V14 M1 7.5 H14" stroke="#c4c4b0" stroke-width="1"/></svg>
<div class="t" style="left:1524px;top:296.7px;font-size:11.5px;color:#3a3a3a">C_abs</div>
<div class="t" style="left:1666px;top:296.7px;font-size:11.3px;color:#5a7ea6;font-style:italic;width:83px;overflow:hidden;height:14px">100x1490 double</div>
<svg style="left:1506px;top:310.3px" width="15" height="15" viewBox="0 0 15 15"><rect x="0.5" y="0.5" width="14" height="14" fill="#ece38a" stroke="#a9a98c"/><rect x="1.5" y="1.5" width="5.5" height="5.5" fill="#eef2f8"/><rect x="8" y="1.5" width="5.5" height="5.5" fill="#f2eaa0"/><rect x="1.5" y="8" width="5.5" height="5.5" fill="#f0e48c"/><rect x="8" y="8" width="5.5" height="5.5" fill="#f0e48c"/><path d="M7.5 1 V14 M1 7.5 H14" stroke="#c4c4b0" stroke-width="1"/></svg>
<div class="t" style="left:1524px;top:313.0px;font-size:11.5px;color:#3a3a3a">column</div>
<div class="t" style="left:1666px;top:313.0px;font-size:11.5px;color:#222">113</div>
<svg style="left:1506px;top:326.6px" width="15" height="15" viewBox="0 0 15 15"><rect x="0.5" y="0.5" width="14" height="14" fill="#ece38a" stroke="#a9a98c"/><rect x="1.5" y="1.5" width="5.5" height="5.5" fill="#eef2f8"/><rect x="8" y="1.5" width="5.5" height="5.5" fill="#f2eaa0"/><rect x="1.5" y="8" width="5.5" height="5.5" fill="#f0e48c"/><rect x="8" y="8" width="5.5" height="5.5" fill="#f0e48c"/><path d="M7.5 1 V14 M1 7.5 H14" stroke="#c4c4b0" stroke-width="1"/></svg>
<div class="t" style="left:1524px;top:329.3px;font-size:11.5px;color:#3a3a3a">currentColumn</div>
<div class="t" style="left:1666px;top:329.3px;font-size:11.3px;color:#5a7ea6;font-style:italic;width:83px;overflow:hidden;height:14px">100x1 double</div>
<svg style="left:1506px;top:342.9px" width="15" height="15" viewBox="0 0 15 15"><rect x="0.5" y="0.5" width="14" height="14" fill="#f0eab0" stroke="#c8c8a0"/><path d="M7.5 3 L12 5 V10 L7.5 12 L3 10 V5 Z" fill="#5a7ab8"/><path d="M3 5 L7.5 7 L12 5 M7.5 7 V12" stroke="#c8d4f0" stroke-width=".8" fill="none"/></svg>
<div class="t" style="left:1524px;top:345.6px;font-size:11.5px;color:#3a3a3a">h</div>
<div class="t" style="left:1666px;top:345.6px;font-size:11.3px;color:#5a7ea6;font-style:italic;width:83px;overflow:hidden;height:14px">1x1 Line</div>
<svg style="left:1506px;top:359.2px" width="15" height="15" viewBox="0 0 15 15"><rect x="0.5" y="0.5" width="14" height="14" fill="#f4eca0" stroke="#c8c8a0"/><path d="M2 7.5 H7 M9 3 V13 M9 3 H13 M9 6 H13 M9 9 H13 M9 12 H13" stroke="#8a9a6a" stroke-width="1"/></svg>
<div class="t" style="left:1524px;top:361.9px;font-size:11.5px;color:#3a3a3a">raw_data</div>
<div class="t" style="left:1666px;top:361.9px;font-size:11.3px;color:#5a7ea6;font-style:italic;width:83px;overflow:hidden;height:14px">1x1 struct</div>
<div class="a" style="left:1749px;top:230px;width:1px;height:610px;background:#d0d0d0"></div>
<div class="a" style="left:1506px;top:824px;width:242px;height:15px;background:#efefef"></div>
<div class="a" style="left:1522px;top:829px;width:199px;height:4px;background:#8c8c8c;border-radius:2px"></div>
<div class="a" style="left:253px;top:841px;width:1496px;height:21px;background:#ececec"></div>
<div class="sb" style="left:1106px;width:100px"></div>
<div class="sb" style="left:1206px;width:110px"></div>
<div class="sb" style="left:1316px;width:52px"></div>
<div class="sb" style="left:1368px;width:240px"></div>
<div class="sb" style="left:1608px;width:130px"></div>
<div class="sbt" style="left:1110px">Zoom: 100%</div>
<div class="sbt" style="left:1209px">UTF-8</div>
<div class="sbt" style="left:1320px">CRLF</div>
<div class="sbt" style="left:1372px">script</div>
<div class="sbt" style="left:1611px">Ln</div>
<div class="sbt" style="left:1632px">27</div>
<div class="sbt" style="left:1679px">Col</div>
<div class="sbt" style="left:1706px">14</div>
<!-- PANELS_END -->
<!-- EXTRA -->
<!-- downloads panel -->
<div class="a" style="left:757px;top:863px;width:971px;height:62px;background:#353535;box-shadow:0 4px 10px rgba(0,0,0,.45)"></div>
<div class="a" style="left:757px;top:873px;width:955px;height:1px;background:#d8d8d8"></div>
<div class="a" style="left:757px;top:874px;width:955px;height:36px;background:#3b3b3b"></div>
<div class="a" style="left:757px;top:910px;width:955px;height:1px;background:#d8d8d8"></div>
<div class="a" style="left:757px;top:911px;width:955px;height:14px;background:#404040"></div>
<div class="t" style="left:765px;top:885px;font-size:13.7px;color:#e6e6e6">rotating-nextgen-static-active-target-range-deception-at-6-5m</div>
<div class="t" style="left:1410px;top:885px;font-size:13.7px;color:#e6e6e6">2023-08-13 10:19</div>
<div class="t" style="left:1553px;top:885px;font-size:13.7px;color:#e6e6e6">1100 KiB</div>
<svg style="left:1644px;top:884px" width="13" height="14" viewBox="0 0 13 14"><path d="M6.5 0.5 V9 M3 5.5 L6.5 9 L10 5.5 M0.8 8 V12.8 H12.2 V8" stroke="#e6e6e6" stroke-width="1.4" fill="none"/></svg>
<svg style="left:1663px;top:885px" width="12" height="12" viewBox="0 0 12 12"><path d="M1 1 L11 11 M11 1 L1 11" stroke="#e6e6e6" stroke-width="1.5"/></svg>
<svg style="left:1684px;top:886px" width="8" height="10" viewBox="0 0 8 10"><path d="M0 0 L8 5 L0 10 Z" fill="#e6e6e6"/></svg>
<div class="a" style="left:757px;top:921px;width:955px;height:4px;overflow:hidden">
<div class="t" style="left:9px;top:0px;font-size:13.7px;color:#cfcfcf;line-height:13px">stationary-nextgen-static-active-target-range-deception-at-4-5m</div>
<div class="t" style="left:653px;top:0px;font-size:13.7px;color:#cfcfcf;line-height:13px">2023-08-13 10:19</div>
<div class="t" style="left:796px;top:0px;font-size:13.7px;color:#cfcfcf;line-height:13px">1000 KiB</div>
<div class="t" style="left:890px;top:0px;font-size:13.7px;color:#cfcfcf;line-height:13px">|  |</div>
</div>
<div class="a" style="left:1712px;top:863px;width:16px;height:62px;background:#e2e2e2"></div>
<div class="a" style="left:1713px;top:863px;width:14px;height:40px;background:#cfcfcf"></div>
<svg style="left:1716px;top:913px" width="8" height="5" viewBox="0 0 8 5"><path d="M0 0 H8 L4 5 Z" fill="#333"/></svg>
<!-- SkyRadar logo -->
<svg style="left:1560px;top:950px" width="340" height="105" viewBox="0 0 340 105">
 <defs>
  <radialGradient id="dish" cx="0.68" cy="0.36" r="0.75"><stop offset="0" stop-color="#17a4e4"/><stop offset="0.5" stop-color="#1e6e9c"/><stop offset="1" stop-color="#27506a"/></radialGradient>
  <linearGradient id="rad" gradientUnits="userSpaceOnUse" x1="0" y1="60" x2="0" y2="90"><stop offset="0" stop-color="#e5741e"/><stop offset="1" stop-color="#f5c816"/></linearGradient>
 </defs>
 <path d="M51 70 V93" stroke="#0a0a0a" stroke-width="7"/>
 <path d="M25.5 99.4 L51 90 L75.7 99.4 Z" fill="#0a0a0a"/>
 <ellipse cx="39" cy="42" rx="27.5" ry="40" transform="rotate(27 39 42)" fill="#060606"/>
 <ellipse cx="36.5" cy="41.5" rx="26.5" ry="39.5" transform="rotate(27 36.5 41.5)" fill="url(#dish)"/>
 <path d="M10 26 L20 31.5" stroke="#1a1a1a" stroke-width="7.5" stroke-linecap="round"/>
 <path d="M20 31.5 L42 44" stroke="#f2f2f2" stroke-width="5" stroke-linecap="round"/>
 <circle cx="43" cy="44.5" r="3.2" fill="#111"/>
 <g fill="#1c6cbf">
  <path d="M68.4 64 Q68.4 60 72.4 60 H76 V77.5 H68.4 Z"/>
  <rect x="68.4" y="71.3" width="38.3" height="6.6"/>
  <rect x="99.2" y="71.3" width="7.5" height="18"/>
  <rect x="68.4" y="82.7" width="38.3" height="6.6"/>
  <rect x="108.5" y="60" width="7.5" height="29.3"/>
  <path d="M116 72 L127.5 66.6 H135.8 L119 76.5 H116 Z M116 74 H124.5 L135.8 89.3 H127 L119 78 H116 Z"/>
  <rect x="137.6" y="66.6" width="7.5" height="22.7"/>
  <rect x="137.6" y="82.7" width="31.9" height="6.6"/>
  <rect x="162" y="66.6" width="7.5" height="30"/>
  <rect x="140.5" y="90" width="29" height="6.6"/>
 </g>
 <path d="M75 60 H106.7 V66.5 H75 Z" fill="url(#rad)"/>
 <g fill="url(#rad)">
  <rect x="174" y="60.2" width="8" height="29.7"/>
  <path d="M174 60.2 H211 Q218.7 60.2 218.7 67 V72 Q218.7 78.3 211 78.3 H174 V71.7 H210.7 V68.2 H174 Z"/>
  <path d="M196.6 78.3 H207.2 L218.7 89.9 H208 Z"/>
  <path d="M220 68.2 H244 Q248.4 68.2 248.4 72 V89.9 H224 Q220 89.9 220 86 V80 Q220 76.6 224 76.6 H240.4 V75.7 H220 Z M228 80.1 V84.1 H240.4 V80.1 Z" fill-rule="evenodd"/>
  <path d="M271.4 59.7 H279.8 V89.9 H254 Q250 89.9 250 86 V70.8 Q250 66.8 254 66.8 H271.4 Z M258.6 74.4 V82.8 H271.4 V74.4 Z" fill-rule="evenodd"/>
  <path d="M282.9 68.2 H306.9 Q311.3 68.2 311.3 72 V89.9 H286.9 Q282.9 89.9 282.9 86 V80 Q282.9 76.6 286.9 76.6 H303.3 V75.7 H282.9 Z M290.9 80.1 V84.1 H303.3 V80.1 Z" fill-rule="evenodd"/>
  <path d="M311.7 89.9 V72 Q311.7 68.2 316 68.2 H332 V74.4 H321 V89.9 Z"/>
 </g>
</svg>
<!-- cursor -->
<svg style="left:1104px;top:81px" width="13" height="20" viewBox="0 0 13 20"><path d="M1 1 V16 L4.5 12.5 L7 18.5 L9.5 17.5 L7 11.5 H12 Z" fill="#fff" stroke="#000" stroke-width="1"/></svg>
<!-- EXTRA_END -->
<!-- MATLAB_END -->
</body></html>
